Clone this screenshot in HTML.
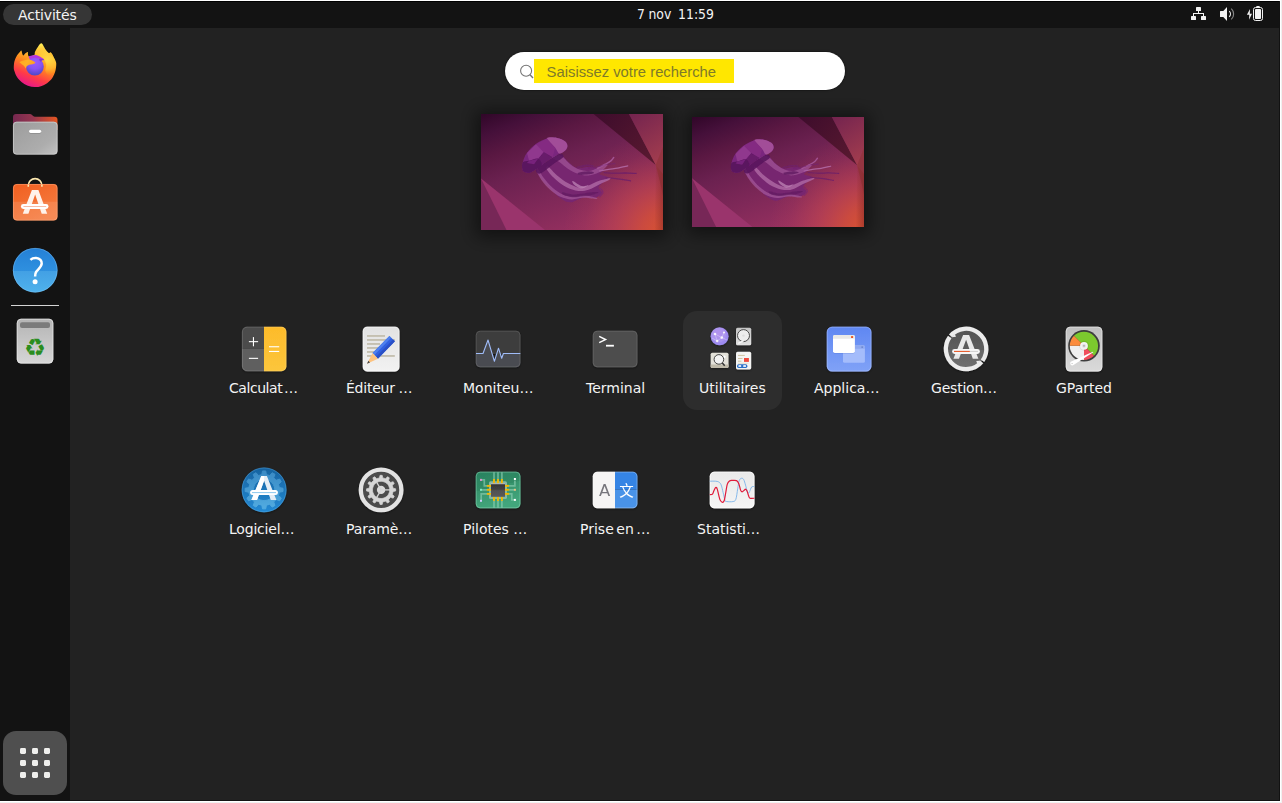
<!DOCTYPE html>
<html lang="fr">
<head>
<meta charset="utf-8">
<title>Activités</title>
<style>
*{box-sizing:border-box;margin:0;padding:0}
html,body{width:1282px;height:803px;overflow:hidden;background:#f0f0f0}
body{font-family:"DejaVu Sans","Liberation Sans",sans-serif;font-size:14px;color:#f2f2f2;position:relative}
#frame{position:absolute;left:0;top:0;width:1281px;height:802px;background:#fff}
#screen{position:absolute;left:0;top:1px;width:1280px;height:800px;background:#222222;overflow:hidden}
#topline{position:absolute;left:0;top:0;width:1280px;height:1px;background:#000;z-index:9}
#botline{position:absolute;left:0;top:799px;width:1280px;height:1px;background:#131313;z-index:9}
#rightline{position:absolute;left:1279px;top:0;width:1px;height:800px;background:#121212;z-index:9}
#topbar{position:absolute;left:0;top:0;width:1280px;height:27px;background:#131313}
#dock{position:absolute;left:0;top:27px;width:70px;height:773px;background:#131313}
#act{position:absolute;left:3px;top:3px;width:89px;height:21px;border-radius:11px;background:#363636}
#act span{position:absolute;left:15px;top:3px;line-height:17px;font-size:14px;letter-spacing:-.16px;color:#f4f4f4}
#clock{position:absolute;left:599.5px;width:152px;text-align:center;top:5px;line-height:17px;font-size:13.8px;word-spacing:-.5px;font-family:"DejaVu Sans Condensed","DejaVu Sans",sans-serif;font-stretch:condensed;color:#f4f4f4;white-space:pre}
#search{position:absolute;left:505px;top:51px;width:340px;height:38px;border-radius:19px;background:#fff;box-shadow:0 0 1.5px .5px rgba(0,0,0,.5)}
#search .hl{position:absolute;left:29px;top:6.5px;width:200px;height:24.7px;background:#ffe700}
#search .ph{position:absolute;left:41.6px;top:11.2px;line-height:18px;font-size:14.8px;font-family:"Liberation Sans","DejaVu Sans",sans-serif;color:#7d7a2a;white-space:nowrap}
.lbl{position:absolute;font-size:14px;line-height:17px;color:#f4f4f4;white-space:nowrap}
#folderbg{position:absolute;left:683px;top:310px;width:99px;height:99px;border-radius:14px;background:#2d2d2d}
</style>
</head>
<body>
<div id="frame"></div>
<div id="screen">
  <div id="topbar">
    <div id="act"><span>Activités</span></div>
    <div id="clock">7 nov  11:59</div>
  </div>
  <div id="dock"></div>
  <div id="search"><div class="hl"></div><div class="ph">Saisissez votre recherche</div></div>
  <div id="folderbg"></div>
<svg id="gfx" width="1280" height="800" viewBox="0 1 1280 800" style="position:absolute;left:0;top:0">
<defs>
<linearGradient id="wpA" gradientUnits="userSpaceOnUse" x1="0" y1="0" x2="61.9" y2="161.9"><stop offset="0" stop-color="#300628"/><stop offset=".12" stop-color="#45103a"/><stop offset=".25" stop-color="#5a1842"/><stop offset=".4" stop-color="#6b2150"/><stop offset=".6" stop-color="#7e2858"/><stop offset=".8" stop-color="#922f5e"/><stop offset="1" stop-color="#a03462"/></linearGradient>
<radialGradient id="wpV" gradientUnits="userSpaceOnUse" cx="186" cy="120" r="104"><stop offset="0" stop-color="#de562c" stop-opacity=".97"/><stop offset=".25" stop-color="#d24e3a" stop-opacity=".85"/><stop offset=".5" stop-color="#c8484a" stop-opacity=".55"/><stop offset=".8" stop-color="#c04450" stop-opacity=".14"/><stop offset="1" stop-color="#c04450" stop-opacity="0"/></radialGradient>
<linearGradient id="wpE" gradientUnits="userSpaceOnUse" x1="173" y1="0" x2="182" y2="0"><stop offset="0" stop-color="#8a2a28" stop-opacity="0"/><stop offset="1" stop-color="#8a2a28" stop-opacity=".55"/></linearGradient>
<linearGradient id="wpR" gradientUnits="userSpaceOnUse" x1="150" y1="0" x2="182" y2="50"><stop offset="0" stop-color="#74244f"/><stop offset="1" stop-color="#a53e4e"/></linearGradient>
<linearGradient id="wpD" gradientUnits="userSpaceOnUse" x1="120" y1="0" x2="175" y2="50"><stop offset="0" stop-color="#3f0d2c"/><stop offset="1" stop-color="#5b1a30"/></linearGradient>
<linearGradient id="wpJ" gradientUnits="userSpaceOnUse" x1="44" y1="56" x2="86" y2="28"><stop offset="0" stop-color="#5e1464"/><stop offset=".5" stop-color="#82287f"/><stop offset="1" stop-color="#a6509a"/></linearGradient>
<linearGradient id="wpT" gradientUnits="userSpaceOnUse" x1="60" y1="45" x2="150" y2="75"><stop offset="0" stop-color="#82307e"/><stop offset=".6" stop-color="#862e78"/><stop offset="1" stop-color="#8a2f78" stop-opacity=".75"/></linearGradient>
<filter id="wpBl" x="-10%" y="-10%" width="120%" height="120%"><feGaussianBlur stdDeviation=".5"/></filter>
<symbol id="wall" viewBox="0 0 182 116" preserveAspectRatio="none">
<rect width="182" height="116" fill="url(#wpA)"/>
<rect width="182" height="116" fill="url(#wpV)"/>
<path d="M0,64.5 L64,116 L0,116Z" fill="#9a346c"/>
<path d="M0,64.5 L25.5,116 L0,116Z" fill="#772757"/>
<path d="M112.5,0 L148,0 L174.8,51Z" fill="url(#wpD)"/>
<path d="M148,0 L182,0 L182,33 L174.8,51Z" fill="url(#wpR)"/>
<path d="M174.8,51 L182,33 L182,78Z" fill="#a83e46"/>
<path d="M174.8,51 L182,33 L182,82 L179.5,70Z" fill="#8e3340" fill-opacity=".8"/>
<path d="M174.8,51 L182,60 L182,116 L173.5,116Z" fill="url(#wpE)"/>
<g filter="url(#wpBl)">
<path d="M55.35,55.28 C56.28,52.39 62.17,49.99 66,47.43 C69.83,44.88 74.78,39.83 78.33,39.92 C81.88,40.02 84.31,45.62 87.3,48 C90.29,50.37 92.9,53.38 96.26,54.16 C99.63,54.95 104.11,52.7 107.48,52.7 C110.84,52.7 113.83,53.64 116.44,54.16 C119.06,54.68 122.8,54.82 123.17,55.84 C123.54,56.87 117.94,59.02 118.69,60.33 C119.43,61.64 127.28,62.2 127.65,63.69 C128.03,65.19 122.61,67.61 120.93,69.3 C119.25,70.98 117.57,72.19 117.57,73.78 C117.57,75.37 121.49,77.14 120.93,78.83 C120.37,80.51 117.38,83.07 114.2,83.87 C111.03,84.67 105.98,82.9 101.87,83.65 C97.76,84.39 93.09,88.13 89.54,88.35 C85.99,88.58 83.75,87.05 80.57,84.99 C77.39,82.94 73.84,79.39 70.48,76.02 C67.12,72.66 62.91,68.27 60.39,64.81 C57.87,61.36 54.41,58.18 55.35,55.28Z" fill="#772670"/>
<path d="M116.44,54.16 C117.75,53.51 122.05,51.45 124.29,50.24 C126.53,49.02 128.5,48 129.9,46.87 C131.3,45.75 132.23,44.07 132.7,43.51" fill="none" stroke="#a85a9e" stroke-width="1.5" stroke-opacity="0.85" stroke-linecap="round"/>
<path d="M118.69,56.96 C120.18,56.68 124.67,55.75 127.65,55.28 C130.64,54.82 133.45,54.72 136.62,54.16 C139.8,53.6 145.03,52.29 146.71,51.92" fill="none" stroke="#b46ca8" stroke-width="1.3" stroke-opacity="0.85" stroke-linecap="round"/>
<path d="M123.17,58.65 C124.85,58.74 129.71,59.15 133.26,59.21 C136.81,59.26 140.83,58.94 144.47,58.98 C148.11,59.02 153.35,59.36 155.12,59.43" fill="none" stroke="#6e2068" stroke-width="1.3" stroke-opacity="0.9" stroke-linecap="round"/>
<path d="M125.41,63.69 C127.28,63.88 132.61,64.29 136.62,64.81 C140.64,65.33 147.37,66.49 149.52,66.83" fill="none" stroke="#6e2068" stroke-width="1.3" stroke-opacity="0.85" stroke-linecap="round"/>
<path d="M118.69,73.78 C119.25,74.53 122.05,76.77 122.05,78.26 C122.05,79.76 119.25,82 118.69,82.75" fill="none" stroke="#7a2672" stroke-width="1.2" stroke-opacity="0.8" stroke-linecap="round"/>
<path d="M96.26,53.6 C97.76,53.23 102.62,51.64 105.23,51.36 C107.85,51.08 110.84,51.83 111.96,51.92" fill="none" stroke="#6e2068" stroke-width="1.6" stroke-opacity="0.8" stroke-linecap="round"/>
<path d="M107.48,53.6 C109.34,53.41 115.32,53.04 118.69,52.48 C122.05,51.92 125.13,50.7 127.65,50.24 C130.18,49.77 132.79,49.77 133.82,49.68" fill="none" stroke="#74226e" stroke-width="1.2" stroke-opacity="0.7" stroke-linecap="round"/>
<path d="M70.48,43.51 C70.29,44.59 75.34,45.94 78.33,48 C81.32,50.05 85.05,53.79 88.42,55.84 C91.78,57.9 95.33,59.39 98.51,60.33 C101.68,61.26 104.11,61.82 107.48,61.45 C110.84,61.07 115.51,59.77 118.69,58.09 C121.86,56.4 125.79,52.57 126.53,51.36 C127.28,50.14 124.85,50.33 123.17,50.8 C121.49,51.27 119.06,53.13 116.44,54.16 C113.83,55.19 110.46,56.72 107.48,56.96 C104.49,57.21 101.5,56.7 98.51,55.62 C95.52,54.54 92.71,52.82 89.54,50.46 C86.36,48.11 82.62,42.65 79.45,41.49 C76.27,40.33 70.67,42.43 70.48,43.51Z" fill="#a85a9e" fill-opacity=".62"/>
<path d="M67.12,52.48 C68.8,53.41 72.72,58.65 76.09,61.45 C79.45,64.25 83.56,67.24 87.3,69.3 C91.03,71.35 95.14,73.41 98.51,73.78 C101.87,74.15 104.3,72.66 107.48,71.54 C110.65,70.42 114.01,68.27 117.57,67.05 C121.12,65.84 127.09,64.4 128.78,64.25 C130.46,64.1 129.34,65.17 127.65,66.16 C125.97,67.15 122.05,68.59 118.69,70.19 C115.32,71.8 111.03,74.68 107.48,75.8 C103.93,76.92 101.12,77.39 97.39,76.92 C93.65,76.45 88.98,75.01 85.05,73 C81.13,70.98 77.02,67.67 73.84,64.81 C70.67,61.95 67.12,57.9 66,55.84 C64.87,53.79 65.43,51.55 67.12,52.48Z" fill="#b872ac" fill-opacity=".7"/>
<path d="M57.03,54.72 C58.15,55.84 60.2,60.51 62.63,63.69 C65.06,66.87 68.42,70.98 71.6,73.78 C74.78,76.58 78.33,79.01 81.69,80.51 C85.05,82 88.23,82.6 91.78,82.75 C95.33,82.9 99.07,81.25 102.99,81.4 C106.91,81.55 113.45,83.05 115.32,83.65 C117.19,84.24 116.44,84.95 114.2,84.99 C111.96,85.03 105.79,83.8 101.87,83.87 C97.95,83.94 94.4,85.63 90.66,85.44 C86.92,85.25 83,84.32 79.45,82.75 C75.9,81.18 72.54,78.83 69.36,76.02 C66.18,73.22 62.63,69.11 60.39,65.93 C58.15,62.76 56.47,58.83 55.91,56.96 C55.35,55.1 55.91,53.6 57.03,54.72Z" fill="#ae62a2" fill-opacity=".6"/>
<path d="M97.39,58.65 C98.88,58.05 104.86,57.19 107.48,57.19 C110.09,57.19 113.08,58.12 113.08,58.65 C113.08,59.17 109.9,59.97 107.48,60.33 C105.05,60.68 100.19,61.06 98.51,60.78 C96.83,60.5 95.89,59.24 97.39,58.65Z" fill="#5e1a5e" fill-opacity=".75"/>
<path d="M81.69,78.26 C83.19,78.17 88.42,80.28 91.78,80.51 C95.14,80.73 98.88,79.98 101.87,79.61 C104.86,79.24 107.1,78.49 109.72,78.26 C112.33,78.04 117.38,77.8 117.57,78.26 C117.75,78.73 113.45,80.41 110.84,81.07 C108.22,81.72 105.05,81.81 101.87,82.19 C98.69,82.56 94.96,83.5 91.78,83.31 C88.6,83.12 84.49,81.91 82.81,81.07 C81.13,80.23 80.2,78.36 81.69,78.26Z" fill="#5e1a5e" fill-opacity=".6"/>
<path d="M91.78,67.05 C93.09,67.33 98.13,71.44 100.75,72.1 C103.36,72.75 107.1,70.7 107.48,70.98 C107.85,71.26 104.49,73.28 102.99,73.78 C101.5,74.28 100.19,74.57 98.51,74 C96.83,73.44 94.02,71.58 92.9,70.42 C91.78,69.26 90.47,66.77 91.78,67.05Z" fill="#d9a6d0" fill-opacity=".55"/>
<path d="M55.35,55.28 C56.8,53.28 62.17,49.99 66,47.43 C69.83,44.88 75.62,40.67 78.33,39.92 C81.04,39.18 83.28,41.23 82.25,42.95 C81.22,44.67 75.52,47.72 72.16,50.24 C68.8,52.76 64.56,56.55 62.07,58.09 C59.59,59.62 58.37,59.9 57.25,59.43 C56.13,58.96 53.89,57.28 55.35,55.28Z" fill="#56145a" fill-opacity=".85"/>
<path d="M41.33,54.72 C41.05,53.04 41.14,50.61 41.89,48 C42.64,45.38 43.67,42.02 45.82,39.03 C47.96,36.04 51.42,32.49 54.78,30.06 C58.15,27.63 62.45,25.48 66,24.45 C69.55,23.43 73.1,23.43 76.09,23.89 C79.07,24.36 82.21,25.95 83.93,27.26 C85.65,28.56 86.31,30.25 86.4,31.74 C86.49,33.23 85.84,34.92 84.49,36.22 C83.15,37.53 80.48,38.37 78.33,39.59 C76.18,40.8 73.66,42.3 71.6,43.51 C69.55,44.73 67.86,45.57 66,46.87 C64.13,48.18 62.26,49.96 60.39,51.36 C58.52,52.76 56.65,54.07 54.78,55.28 C52.92,56.5 51.05,58.18 49.18,58.65 C47.31,59.11 44.88,58.74 43.57,58.09 C42.27,57.43 41.61,56.4 41.33,54.72Z" fill="#7a277e"/>
<path d="M66,24.45 C66.28,22.77 73.1,23.43 76.09,23.89 C79.07,24.36 82.21,25.95 83.93,27.26 C85.65,28.56 86.31,30.25 86.4,31.74 C86.49,33.23 85.84,34.92 84.49,36.22 C83.15,37.53 80.01,39.96 78.33,39.59 C76.65,39.21 76.46,36.5 74.4,33.98 C72.35,31.46 65.72,26.13 66,24.45Z" fill="#a24e98"/>
<path d="M55.01,30.28 L66,24.57 L74.18,33.76 L71.6,43.29 L62.63,37.91Z" fill="#842c82"/>
<path d="M62.63,37.91 L71.6,43.29 L66.22,46.87 L60.61,51.13 L57.03,44.63Z" fill="#671a6a"/>
<path d="M46.04,39.03 L55.01,30.28 L62.63,37.91 L57.03,44.63 L48.06,46.87Z" fill="#90388e"/>
<path d="M41.33,54.72 C41.05,53.08 40.77,49.53 41.89,48.22 C43.01,46.91 45.54,47.47 48.06,46.87 C50.58,46.28 54.93,43.92 57.03,44.63 C59.12,45.34 60.99,49.36 60.61,51.13 C60.24,52.91 56.69,54.03 54.78,55.28 C52.88,56.53 51.05,58.18 49.18,58.65 C47.31,59.11 44.88,58.74 43.57,58.09 C42.27,57.43 41.61,56.37 41.33,54.72Z" fill="#5a155e"/>
<path d="M48.06,46.87 L57.03,44.63 L53.1,50.24 L45.82,49.12Z" fill="#7e2682" fill-opacity=".8"/>
</g>
</symbol></defs>
<defs><filter id="thS" x="-30%" y="-40%" width="160%" height="180%"><feGaussianBlur stdDeviation="9"/></filter></defs>
<rect x="476" y="111" width="192" height="126" fill="#000" fill-opacity=".5" filter="url(#thS)"/>
<rect x="687" y="114" width="182" height="120" fill="#000" fill-opacity=".5" filter="url(#thS)"/>
<use href="#wall" x="481" y="114" width="182" height="116"/>
<use href="#wall" x="692" y="117" width="172" height="110"/>
<circle cx="526.1" cy="70.8" r="5.5" fill="none" stroke="#747474" stroke-width="1.1"/><path d="M530,74.8 L533,77.9" stroke="#747474" stroke-width="1.4"/>
<defs><filter id="icS" x="-2%" y="-5%" width="104%" height="110%"><feDropShadow dx="0" dy="1" stdDeviation="0.9" flood-color="#000" flood-opacity=".4"/></filter></defs>
<g fill="#f2f2f2">
<rect x="1196" y="7" width="5" height="4" rx=".6"/><rect x="1191" y="16" width="5" height="4" rx=".6"/><rect x="1201" y="16" width="5" height="4" rx=".6"/>
<rect x="1198" y="10.5" width="1" height="3"/><rect x="1193" y="13" width="11" height="1"/><rect x="1193" y="13" width="1" height="3.5"/><rect x="1203" y="13" width="1" height="3.5"/>
<path d="M1220.6,11 L1223.3,11 L1227,7 L1227,21 L1223.3,17 L1220.6,17 Q1220,17 1220,16.4 L1220,11.6 Q1220,11 1220.6,11Z"/>
</g>
<path d="M1229.3,11.2 A4,4 0 0 1 1229.3,16.8" fill="none" stroke="#f2f2f2" stroke-width="1.1"/>
<path d="M1231.3,8.6 A7.4,7.4 0 0 1 1231.3,19.4" fill="none" stroke="#8a8a8a" stroke-width="1.1"/>
<path d="M1250,9 L1246.9,14.7 L1249.3,14.7 L1249,19.8 L1252,13.7 L1249.8,13.7 Z" fill="#f2f2f2"/>
<rect x="1253.5" y="7.5" width="9" height="13" rx="2" fill="none" stroke="#f2f2f2" stroke-width="1"/>
<path d="M1256,7.2 L1256.6,6 L1259.4,6 L1260,7.2Z" fill="#f2f2f2"/>
<rect x="1255" y="9" width="6" height="10" rx=".8" fill="#f2f2f2"/>
<defs><linearGradient id="ffA" gradientUnits="userSpaceOnUse" x1="46" y1="44" x2="27" y2="87"><stop offset="0" stop-color="#fff25a"/><stop offset=".28" stop-color="#ffc330"/><stop offset=".5" stop-color="#ff8a1e"/><stop offset=".75" stop-color="#ff3b47"/><stop offset="1" stop-color="#e51490"/></linearGradient><radialGradient id="ffG" gradientUnits="userSpaceOnUse" cx="35" cy="62" r="13"><stop offset="0" stop-color="#9a5cff"/><stop offset=".55" stop-color="#8652f2"/><stop offset="1" stop-color="#4f49c8"/></radialGradient><linearGradient id="ffH" gradientUnits="userSpaceOnUse" x1="18" y1="55" x2="34" y2="66"><stop offset="0" stop-color="#ffa21e"/><stop offset=".6" stop-color="#ffb227"/><stop offset="1" stop-color="#ff9a22"/></linearGradient><radialGradient id="ffY" gradientUnits="userSpaceOnUse" cx="47" cy="60" r="16"><stop offset="0" stop-color="#ffe04a" stop-opacity=".85"/><stop offset=".6" stop-color="#ffc436" stop-opacity=".6"/><stop offset="1" stop-color="#ff9a20" stop-opacity="0"/></radialGradient></defs>
<path d="M41.41,43.25 C42.72,43.54 44.17,47.58 45.34,49.18 C46.5,50.78 47.52,52.23 48.39,52.84 C49.26,53.45 49.77,52.29 50.57,52.84 C51.37,53.39 52.31,54.73 53.18,56.16 C54.05,57.58 55.29,59.93 55.8,61.39 C56.31,62.84 56.31,63.28 56.23,64.87 C56.16,66.47 56.02,68.8 55.36,70.98 C54.71,73.16 53.69,75.92 52.31,77.95 C50.93,79.99 48.97,81.8 47.08,83.18 C45.19,84.56 43.01,85.58 40.98,86.23 C38.94,86.89 37.05,87.18 34.87,87.11 C32.69,87.03 30.08,86.6 27.9,85.8 C25.72,85 23.61,83.76 21.8,82.31 C19.98,80.86 18.24,78.97 17,77.08 C15.77,75.19 14.92,72.57 14.39,70.98 C13.85,69.38 13.78,69.09 13.78,67.49 C13.78,65.89 13.92,63.28 14.39,61.39 C14.85,59.5 15.69,57.68 16.56,56.16 C17.44,54.63 18.82,53.18 19.62,52.23 C20.42,51.29 20.92,50.27 21.36,50.49 C21.8,50.71 21.9,52.71 22.23,53.54 C22.57,54.37 22.78,55.53 23.37,55.46 C23.95,55.39 24.99,53.68 25.72,53.1 C26.45,52.52 27.33,51.68 27.72,51.97 C28.12,52.26 27.83,54.08 28.07,54.85 C28.32,55.62 28.15,56.59 29.21,56.59 C30.27,56.59 33.49,55.57 34.44,54.85 C35.38,54.12 34.37,53.47 34.87,52.23 C35.38,51 36.4,48.93 37.49,47.44 C38.58,45.94 40.1,42.96 41.41,43.25Z" fill="url(#ffA)"/>
<path d="M47.78,53.71 L50.83,52.32 L52.31,54.59 L53.88,57.72 L50.13,56.16Z" fill="#ffc233"/>
<path d="M41.41,43.95 C42.57,44.39 44.1,48.02 45.34,49.62 C46.57,51.21 47.59,52.3 48.82,53.54 C50.06,54.77 51.7,55.57 52.75,57.03 C53.79,58.48 54.66,60.66 55.1,62.26 C55.54,63.86 55.61,65.02 55.36,66.62 C55.11,68.22 54.71,70.4 53.62,71.85 C52.53,73.3 50.2,75.48 48.82,75.34 C47.44,75.19 45.77,72.72 45.34,70.98 C44.9,69.23 46.5,66.91 46.21,64.87 C45.92,62.84 44.9,60.37 43.59,58.77 C42.28,57.17 39.81,56.01 38.36,55.28 C36.91,54.56 35.31,55.14 34.87,54.41 C34.44,53.68 35.16,52.16 35.75,50.92 C36.33,49.69 37.42,48.16 38.36,47 C39.31,45.84 40.25,43.51 41.41,43.95Z" fill="url(#ffY)"/>
<path d="M28.77,56.59 C28.99,55.89 30.66,55.73 31.82,55.46 C32.98,55.18 34.51,54.82 35.75,54.93 C36.98,55.05 38.07,55.59 39.23,56.16 C40.4,56.72 41.92,57.68 42.72,58.33 C43.52,58.99 44.32,59.93 44.03,60.08 C43.74,60.22 41.92,59.42 40.98,59.21 C40.03,58.99 39.38,58.7 38.36,58.77 C37.34,58.84 36.18,59.5 34.87,59.64 C33.57,59.79 31.53,60.15 30.51,59.64 C29.5,59.13 28.55,57.29 28.77,56.59Z" fill="#b436e2"/>
<circle cx="34.9" cy="66.6" r="8.9" fill="url(#ffG)"/>
<path d="M39.67,58.77 C40.18,58.58 41.56,58.73 42.28,58.95 C43.01,59.16 44.1,59.82 44.03,60.08 C43.96,60.34 42.36,60.22 41.85,60.51 C41.34,60.8 41.41,61.89 40.98,61.82 C40.54,61.75 39.45,60.59 39.23,60.08 C39.01,59.57 39.16,58.96 39.67,58.77Z" fill="#7a38d6"/>
<path d="M19.62,62.08 C19.91,61.47 22.01,60.95 23.54,60.51 C25.07,60.08 27.24,59.44 28.77,59.47 C30.3,59.5 31.6,60.15 32.69,60.69 C33.78,61.23 35.35,62.11 35.31,62.69 C35.27,63.28 33.45,63.81 32.43,64.18 C31.42,64.54 30.18,64.5 29.21,64.87 C28.23,65.25 27.17,65.86 26.59,66.44 C26.01,67.02 26.16,68.48 25.72,68.36 C25.28,68.24 24.63,66.44 23.98,65.75 C23.32,65.05 22.52,64.79 21.8,64.18 C21.07,63.57 19.33,62.69 19.62,62.08Z" fill="url(#ffH)"/>
<defs><linearGradient id="flB" x1="0" y1="0" x2="1" y2="0"><stop offset="0" stop-color="#762850"/><stop offset=".45" stop-color="#96364f"/><stop offset="1" stop-color="#e65621"/></linearGradient><linearGradient id="flF" x1="0" y1="0" x2="1" y2="1"><stop offset="0" stop-color="#9c9c9c"/><stop offset=".7" stop-color="#adadad"/><stop offset="1" stop-color="#c2c2c2"/></linearGradient></defs>
<path d="M13,117 Q13,114 16,114 L30,114 Q31.2,114 32,114.9 L33.2,116.1 Q33.8,116.7 35,116.7 L54.5,116.7 Q57.5,116.7 57.5,119.7 L57.5,130 L13,130Z" fill="url(#flB)"/>
<rect x="13" y="121.8" width="44.5" height="32.8" rx="3.6" fill="url(#flF)"/>
<rect x="13.4" y="122.2" width="43.7" height="32" rx="3.3" fill="none" stroke="#d9d9d9" stroke-opacity=".75" stroke-width=".8"/>
<rect x="29" y="130.3" width="12.2" height="3.4" rx="1.7" fill="#8a8a8a"/>
<rect x="29" y="129.7" width="12.2" height="3.2" rx="1.6" fill="#fff"/>
<defs><linearGradient id="swB" x1="0" y1="0" x2=".6" y2="1"><stop offset="0" stop-color="#f15f20"/><stop offset="1" stop-color="#f57c40"/></linearGradient></defs>
<path d="M28.3,186.6 L28.3,185.4 A6.8,6.8 0 0 1 41.9,185.4 L41.9,186.6" fill="none" stroke="#fce8b0" stroke-width="1.6"/>
<rect x="13" y="184" width="44.5" height="36.5" rx="4" fill="url(#swB)"/>
<path d="M13,201.8 H57.5 V216.5 Q57.5,220.5 53.5,220.5 H17 Q13,220.5 13,216.5Z" fill="#fff" fill-opacity=".11"/>
<rect x="13.4" y="184.4" width="43.7" height="35.7" rx="3.7" fill="none" stroke="#ffb48a" stroke-opacity=".55" stroke-width=".8"/>
<path d="M28.3,186.8 V184.6 M41.9,186.8 V184.6" stroke="#fce8b0" stroke-width="1.6"/>
<path d="M31.9,190 L38.4,190 L47.2,213.8 L41.7,213.8 L35.15,194.5 L28.4,213.8 L22.8,213.8Z" fill="#fff2ea"/>
<rect x="20.9" y="204.1" width="27.6" height="4.9" rx="2.45" fill="#fff"/>
<rect x="23.4" y="206.1" width="22.8" height=".9" fill="#f8b59c"/>
<defs><linearGradient id="hpB" x1="0" y1="0" x2="0" y2="1"><stop offset="0" stop-color="#2480d6"/><stop offset=".52" stop-color="#2f90df"/><stop offset=".52" stop-color="#43a0e4"/><stop offset="1" stop-color="#4fb2ec"/></linearGradient></defs>
<circle cx="35.2" cy="270.2" r="22.3" fill="url(#hpB)"/>
<circle cx="35.2" cy="270.2" r="21.9" fill="none" stroke="#8fd0ff" stroke-opacity=".45" stroke-width=".8"/>
<path d="M30.4,259.9 C32,258.4 34.3,258 36.2,258.1 C40,258.3 41.9,260.9 41.7,263.6 C41.4,267.2 37.6,269.6 36.1,272 C35.2,273.4 35.1,274.6 35.1,276.6" fill="none" stroke="#fff" stroke-width="2.5"/>
<circle cx="35.1" cy="281.7" r="2.5" fill="#fff"/>
<rect x="11" y="305" width="48" height="1" fill="#d4d4d4"/>
<defs><linearGradient id="trB" x1="0" y1="0" x2="0" y2="1"><stop offset="0" stop-color="#b4b4b4"/><stop offset="1" stop-color="#d6d6d6"/></linearGradient></defs>
<rect x="16.8" y="318.8" width="36.5" height="44.7" rx="4.2" fill="url(#trB)"/>
<rect x="17.2" y="319.2" width="35.7" height="43.9" rx="3.9" fill="none" stroke="#ececec" stroke-opacity=".8" stroke-width=".8"/>
<rect x="20" y="322.3" width="30" height="5.8" rx="2" fill="#7b7b7b"/>
<text x="35.1" y="355.6" font-family="DejaVu Sans,sans-serif" font-size="24.5" text-anchor="middle" fill="#2a8d1e">♻</text>
<rect x="3" y="731" width="64" height="64" rx="13" fill="#4f4f4f"/>
<rect x="20" y="748" width="6" height="6" rx="1.4" fill="#efefed"/>
<rect x="32" y="748" width="6" height="6" rx="1.4" fill="#efefed"/>
<rect x="44" y="748" width="6" height="6" rx="1.4" fill="#efefed"/>
<rect x="20" y="760" width="6" height="6" rx="1.4" fill="#efefed"/>
<rect x="32" y="760" width="6" height="6" rx="1.4" fill="#efefed"/>
<rect x="44" y="760" width="6" height="6" rx="1.4" fill="#efefed"/>
<rect x="20" y="772" width="6" height="6" rx="1.4" fill="#efefed"/>
<rect x="32" y="772" width="6" height="6" rx="1.4" fill="#efefed"/>
<rect x="44" y="772" width="6" height="6" rx="1.4" fill="#efefed"/>
<g filter="url(#icS)">
<defs><clipPath id="ccp"><rect x="242" y="326.7" width="44.4" height="44.6" rx="5"/></clipPath><linearGradient id="clY" x1="0" y1="0" x2="0" y2="1"><stop offset="0" stop-color="#fdbb2a"/><stop offset="1" stop-color="#fcc63c"/></linearGradient></defs>
<g clip-path="url(#ccp)"><rect x="242" y="326" width="22" height="22.7" fill="#4b4b4b"/><rect x="242" y="348.7" width="22" height="23" fill="#5e5e5e"/><rect x="264" y="326" width="23" height="46" fill="url(#clY)"/></g>
<rect x="242.4" y="327.1" width="43.6" height="43.8" rx="4.7" fill="none" stroke="#fff" stroke-opacity=".18" stroke-width=".8"/>
<g fill="#fff"><rect x="248.9" y="341.1" width="9.2" height="1.1"/><rect x="252.9" y="337.1" width="1.1" height="9.2"/><rect x="248.9" y="357.8" width="9.2" height="1.1"/><rect x="269" y="346.2" width="10.2" height="1.1"/><rect x="269" y="350.9" width="10.2" height="1.1"/></g>
<defs><linearGradient id="teB" x1="0" y1="0" x2="0" y2="1"><stop offset="0" stop-color="#e2e2e2"/><stop offset="1" stop-color="#f2f2f2"/></linearGradient></defs>
<rect x="362.8" y="326.7" width="36.6" height="44.7" rx="4.4" fill="url(#teB)"/>
<rect x="363.2" y="327.1" width="35.8" height="43.9" rx="4.1" fill="none" stroke="#fff" stroke-opacity=".7" stroke-width=".8"/>
<g fill="#c5c0b1">
<rect x="367" y="335" width="18" height="1.9"/>
<rect x="367" y="339" width="27.8" height="1.9"/>
<rect x="367" y="343" width="13" height="1.9"/>
<rect x="367" y="347" width="17" height="1.9"/>
<rect x="367" y="351" width="13" height="1.9"/>
<rect x="367" y="355" width="27.8" height="1.9"/>
</g>
<path d="M389.4,335.9 L394.9,341.3 L377.9,358.7 L372.6,353.1Z" fill="#3060e0"/>
<path d="M389.4,335.9 L391.2,337.7 L374.4,355 L372.6,353.1Z" fill="#4f80ee"/>
<path d="M393.1,339.5 L394.9,341.3 L377.9,358.7 L376.1,356.8Z" fill="#2950c6"/>
<path d="M372.6,353.1 L377.9,358.7 L367,363.8Z" fill="#fdc380"/>
<path d="M367,363.8 L368.4,360.8 L370,362.4Z" fill="#454545"/>
<defs><clipPath id="smc"><rect x="475.8" y="330.8" width="44.6" height="36.4" rx="4.3"/></clipPath></defs>
<g clip-path="url(#smc)"><rect x="475" y="330" width="46" height="24" fill="#3c3c3c"/>
<path d="M475,353.5 L483,353.5 L488,340 L494.4,361.3 L498.5,348.2 L501.7,358.3 L503.4,353.5 L521,353.5 L521,368 L475,368Z" fill="#4a4b51"/></g>
<rect x="476.2" y="331.2" width="43.8" height="35.6" rx="4" fill="none" stroke="#8a8a8a" stroke-opacity=".38" stroke-width=".8"/>
<path d="M476,353.5 L483,353.5 L488,340 L494.4,361.3 L498.5,348.2 L501.7,358.3 L503.4,353.5 L520.3,353.5" fill="none" stroke="#9fbcf8" stroke-width="1.1" stroke-linejoin="round"/>
<rect x="592.8" y="330.8" width="44.6" height="36.4" rx="4.3" fill="#4d4d4d"/>
<rect x="593.2" y="331.2" width="43.8" height="35.6" rx="4" fill="none" stroke="#8c8c8c" stroke-opacity=".38" stroke-width=".8"/>
<path d="M599.2,336.4 L605.5,339.6 L599.2,342.6" fill="none" stroke="#fff" stroke-width="1.5"/>
<rect x="606" y="344.8" width="7.9" height="1.8" fill="#fff"/>
<defs><radialGradient id="utG" cx=".45" cy=".35" r=".7"><stop offset="0" stop-color="#ab86ec"/><stop offset="1" stop-color="#9a8cf2"/></radialGradient><linearGradient id="utD" x1="0" y1="0" x2="0" y2="1"><stop offset="0" stop-color="#c4c4c4"/><stop offset="1" stop-color="#e2e2e2"/></linearGradient></defs>
<circle cx="719.6" cy="336.3" r="9" fill="url(#utG)"/>
<circle cx="718.5" cy="335" r="7.5" fill="#fff" fill-opacity=".1"/><g fill="#fff" fill-opacity=".85"><circle cx="715" cy="334" r="1.3"/><circle cx="724" cy="332.5" r="1.1"/><circle cx="721.8" cy="337.6" r="1.3"/><circle cx="717.2" cy="341" r="1.2"/></g>
<path d="M715,334 L721.8,337.6 L724,332.5 M721.8,337.6 L717.2,341 L715,334 M712,338 L717.2,341 M721.8,337.6 L727,340" stroke="#fff" stroke-opacity=".4" stroke-width=".7" fill="none"/>
<rect x="736" y="327.7" width="15.2" height="17.6" rx="1.6" fill="url(#utD)"/>
<circle cx="743.5" cy="335.6" r="6" fill="#ededed" stroke="#3a3a3a" stroke-width=".9"/>
<circle cx="743.5" cy="335.6" r="1.2" fill="#dcdcdc"/>
<path d="M738.3,343.4 L743.6,340.6" stroke="#fafafa" stroke-width="1.3"/>
<rect x="710.7" y="352.7" width="17.8" height="15.4" rx="1.6" fill="#e3e1d9"/>
<path d="M710.7,364.6 H728.5 V366.5 Q728.5,368.1 726.9,368.1 H712.3 Q710.7,368.1 710.7,366.5Z" fill="#bfbaaa"/>
<circle cx="724.4" cy="356.8" r="1.2" fill="#fff"/>
<circle cx="718.9" cy="359.4" r="4.8" fill="#f4f4f4" stroke="#333" stroke-width=".9"/>
<path d="M722.3,363 L724.7,365.7" stroke="#333" stroke-width="1.5"/>
<rect x="736" y="351.8" width="15.2" height="17.6" rx="1.6" fill="#f4f4f3"/>
<g fill="#cdbf98"><rect x="738" y="354.9" width="6.8" height=".9"/><rect x="738" y="358" width="4.5" height=".9"/><rect x="738" y="360.7" width="3.4" height=".9"/><rect x="738" y="362.9" width="10.5" height=".6" fill-opacity=".6"/></g>
<rect x="744" y="358" width="4.9" height="3.9" fill="#f04a3e"/>
<rect x="737" y="364.3" width="10.4" height="3.6" rx="1.6" fill="#2c70c8"/>
<rect x="738.4" y="365.1" width="2.8" height="1.9" rx=".6" fill="#dce8f8"/><rect x="743.2" y="365.1" width="2.8" height="1.9" rx=".6" fill="#dce8f8"/>
<defs><linearGradient id="exB" x1="0" y1="0" x2="0" y2="1"><stop offset="0" stop-color="#5f87f2"/><stop offset="1" stop-color="#80a2f7"/></linearGradient></defs>
<rect x="826.8" y="326.7" width="44.6" height="44.7" rx="5.2" fill="url(#exB)"/>
<rect x="827.2" y="327.1" width="43.8" height="43.9" rx="4.9" fill="none" stroke="#c5d5ff" stroke-opacity=".5" stroke-width=".8"/>
<rect x="843" y="345.3" width="21.9" height="17.5" rx="1.6" fill="#a4bcfb"/>
<path d="M843,348.8 V346.9 Q843,345.3 844.6,345.3 H863.3 Q864.9,345.3 864.9,346.9 V348.8Z" fill="#8fa9f0"/>
<rect x="861.4" y="346.4" width="1.6" height="1.5" fill="#6e88cc"/>
<rect x="833" y="335.3" width="21.9" height="18.2" rx="1.8" fill="#3c5fc0" fill-opacity=".35"/>
<rect x="833" y="335" width="21.9" height="18" rx="1.8" fill="#fff"/>
<path d="M833,338.7 V336.8 Q833,335 834.8,335 H853.1 Q854.9,335 854.9,336.8 V338.7Z" fill="#e9e9e7"/>
<rect x="851.1" y="336.1" width="2" height="1.9" fill="#e95420"/>
<defs><linearGradient id="umD" x1="0" y1="0" x2="0" y2="1"><stop offset="0" stop-color="#555"/><stop offset=".52" stop-color="#5d5d5d"/><stop offset=".52" stop-color="#686868"/><stop offset="1" stop-color="#6e6e6e"/></linearGradient></defs>
<circle cx="966.1" cy="348.9" r="20" fill="url(#umD)"/>
<path d="M950.59,335.88 A20.25,20.25 0 0 1 982.48,360.8" fill="none" stroke="#ececec" stroke-width="4.3"/>
<path d="M981.61,361.92 A20.25,20.25 0 0 1 949.72,337" fill="none" stroke="#ececec" stroke-width="4.3"/>
<path d="M952.08,337.14 L955.94,336.8 L954.91,334.05 Z" fill="#ececec"/>
<path d="M980.12,360.66 L976.26,361 L977.29,363.75 Z" fill="#ececec"/>
<path d="M963.1,335 L969.1,335 L978.4,358.7 L972.8,358.7 L966.1,339.8 L959,358.7 L953.4,358.7Z" fill="#e9e9e9"/>
<rect x="952.1" y="349" width="27.8" height="4.9" rx="2.45" fill="#f6f6f6"/>
<rect x="954" y="350.9" width="24" height="1" fill="#cfcfcf"/><rect x="954" y="350.9" width="15.8" height="1" fill="#e95420"/>
<defs><linearGradient id="gpB" x1="0" y1="0" x2="0" y2="1"><stop offset="0" stop-color="#c0c0c0"/><stop offset="1" stop-color="#dadada"/></linearGradient></defs>
<rect x="1065.8" y="326.7" width="36.5" height="44.7" rx="4.3" fill="url(#gpB)"/>
<rect x="1066.2" y="327.1" width="35.7" height="43.9" rx="4" fill="none" stroke="#f0f0f0" stroke-opacity=".7" stroke-width=".8"/>
<circle cx="1084.0" cy="345.8" r="15.8" fill="#3c3c3c"/>
<path d="M1084,345.8 L1073.96,335.76 A14.2,14.2 0 0 1 1094.04,355.84 Z" fill="#7cc92e"/>
<path d="M1084,345.8 L1094.04,355.84 A14.2,14.2 0 0 1 1084,360 Z" fill="#f04f5c"/>
<path d="M1084,345.8 L1084,360 A14.2,14.2 0 0 1 1069.8,345.8 Z" fill="#efefef"/>
<path d="M1084,345.8 L1069.8,345.8 A14.2,14.2 0 0 1 1073.96,335.76 Z" fill="#fb8c3d"/>
<circle cx="1084.0" cy="345.8" r="5" fill="#000" fill-opacity=".08"/>
<circle cx="1084.0" cy="345.8" r="3.9" fill="#f3f3f3"/>
<circle cx="1084.0" cy="345.8" r="1.9" fill="#dedede"/><circle cx="1084.0" cy="345.8" r=".9" fill="#a8a8a8"/>
<path d="M1070.7,361.8 L1092.9,351.7 L1093.3,352.3 L1073.1,365.3 A2.2,2.2 0 0 1 1070.7,361.8Z" fill="#fff"/>
<circle cx="1072.1" cy="363.5" r=".6" fill="#bbb"/>
<defs><linearGradient id="suB" x1="0" y1="0" x2="0" y2="1"><stop offset="0" stop-color="#17629f"/><stop offset="1" stop-color="#238ad4"/></linearGradient><linearGradient id="suG" x1="0" y1="0" x2="0" y2="1"><stop offset="0" stop-color="#3a8ac4"/><stop offset="1" stop-color="#52abe0"/></linearGradient></defs>
<circle cx="264.1" cy="489.9" r="22.4" fill="url(#suB)"/>
<circle cx="264.1" cy="489.9" r="22" fill="none" stroke="#7cc4f0" stroke-opacity=".35" stroke-width=".8"/>
<path d="M261.79,474.67 L262.51,470.97 L265.69,470.97 L266.41,474.67 L269.71,475.56 L272.19,472.71 L274.94,474.3 L273.71,477.87 L276.13,480.29 L279.7,479.06 L281.29,481.81 L278.44,484.29 L279.33,487.59 L283.03,488.31 L283.03,491.49 L279.33,492.21 L278.44,495.51 L281.29,497.99 L279.7,500.74 L276.13,499.51 L273.71,501.93 L274.94,505.5 L272.19,507.09 L269.71,504.24 L266.41,505.13 L265.69,508.83 L262.51,508.83 L261.79,505.13 L258.49,504.24 L256.01,507.09 L253.26,505.5 L254.49,501.93 L252.07,499.51 L248.5,500.74 L246.91,497.99 L249.76,495.51 L248.87,492.21 L245.17,491.49 L245.17,488.31 L248.87,487.59 L249.76,484.29 L246.91,481.81 L248.5,479.06 L252.07,480.29 L254.49,477.87 L253.26,474.3 L256.01,472.71 L258.49,475.56Z M274.64,488.04 L274.15,486.24 L273.37,484.55 L272.3,483.02 L270.98,481.7 L269.45,480.63 L267.76,479.85 L265.96,479.36 L264.1,479.2 L262.24,479.36 L260.44,479.85 L258.75,480.63 L257.22,481.7 L255.9,483.02 L254.83,484.55 L254.05,486.24 L253.56,488.04 L253.4,489.9 L253.56,491.76 L254.05,493.56 L254.83,495.25 L255.9,496.78 L257.22,498.1 L258.75,499.17 L260.44,499.95 L262.24,500.44 L264.1,500.6 L265.96,500.44 L267.76,499.95 L269.45,499.17 L270.98,498.1 L272.3,496.78 L273.37,495.25 L274.15,493.56 L274.64,491.76 L274.8,489.9Z" fill="url(#suG)" fill-rule="evenodd" stroke="url(#suG)" stroke-width="1" stroke-linejoin="round"/>
<path d="M261.3,476 L266.9,476 L276.4,499.9 L270.8,499.9 L264.1,480.8 L257,499.9 L251.4,499.9Z" fill="#e4edf5"/>
<path d="M261.3,476 L264.1,476 L264.1,480.8 L257,499.9 L251.4,499.9Z" fill="#fff"/>
<rect x="250.1" y="490.1" width="27.8" height="5" rx="2.5" fill="#fff"/>
<rect x="252" y="492.1" width="24" height="1" fill="#8cc8ee"/>
<circle cx="381.1" cy="489.9" r="20.3" fill="#4b4b4b" stroke="#e3e3e3" stroke-width="4.3"/>
<path d="M379.43,477.92 L380,475.34 L382.2,475.34 L382.77,477.92 L385.65,478.69 L387.43,476.74 L389.33,477.84 L388.54,480.36 L390.64,482.46 L393.16,481.67 L394.26,483.57 L392.31,485.35 L393.08,488.23 L395.66,488.8 L395.66,491 L393.08,491.57 L392.31,494.45 L394.26,496.23 L393.16,498.13 L390.64,497.34 L388.54,499.44 L389.33,501.96 L387.43,503.06 L385.65,501.11 L382.77,501.88 L382.2,504.46 L380,504.46 L379.43,501.88 L376.55,501.11 L374.77,503.06 L372.87,501.96 L373.66,499.44 L371.56,497.34 L369.04,498.13 L367.94,496.23 L369.89,494.45 L369.12,491.57 L366.54,491 L366.54,488.8 L369.12,488.23 L369.89,485.35 L367.94,483.57 L369.04,481.67 L371.56,482.46 L373.66,480.36 L372.87,477.84 L374.77,476.74 L376.55,478.69Z M389.57,488.41 L389.18,486.96 L388.55,485.6 L387.69,484.37 L386.63,483.31 L385.4,482.45 L384.04,481.82 L382.59,481.43 L381.1,481.3 L379.61,481.43 L378.16,481.82 L376.8,482.45 L375.57,483.31 L374.51,484.37 L373.65,485.6 L373.02,486.96 L372.63,488.41 L372.5,489.9 L372.63,491.39 L373.02,492.84 L373.65,494.2 L374.51,495.43 L375.57,496.49 L376.8,497.35 L378.16,497.98 L379.61,498.37 L381.1,498.5 L382.59,498.37 L384.04,497.98 L385.4,497.35 L386.63,496.49 L387.69,495.43 L388.55,494.2 L389.18,492.84 L389.57,491.39 L389.7,489.9Z" fill="#d6d6d6" fill-rule="evenodd" stroke="#d6d6d6" stroke-width=".7" stroke-linejoin="round"/>
<circle cx="381.1" cy="489.9" r="4.2" fill="#dadada"/>
<path d="M381.1,489.9 L390.1,489.9" stroke="#d4d4d4" stroke-width="1.3"/>
<path d="M381.1,489.9 L376.6,482.11" stroke="#d4d4d4" stroke-width="1.3"/>
<path d="M381.1,489.9 L376.6,497.69" stroke="#d4d4d4" stroke-width="1.3"/>
<defs><linearGradient id="drB" x1="0" y1="0" x2=".3" y2="1"><stop offset="0" stop-color="#2a8260"/><stop offset=".5" stop-color="#318c66"/><stop offset=".5" stop-color="#37946d"/><stop offset="1" stop-color="#43a67c"/></linearGradient><linearGradient id="drC" x1="0" y1="0" x2="0" y2="1"><stop offset="0" stop-color="#333"/><stop offset=".5" stop-color="#464646"/><stop offset=".5" stop-color="#505050"/><stop offset="1" stop-color="#5a5a5a"/></linearGradient></defs>
<rect x="475.8" y="471.7" width="44.6" height="36.5" rx="4.3" fill="url(#drB)"/>
<rect x="476.2" y="472.1" width="43.8" height="35.7" rx="4" fill="none" stroke="#9be0c0" stroke-opacity=".55" stroke-width=".8"/>
<g stroke="#8fd0b4" stroke-opacity=".62" stroke-width="1.7" fill="none">
<path d="M494,472.2 V480 M494,500 V507.8"/>
<path d="M498,472.2 V480 M498,500 V507.8"/>
<path d="M501.9,472.2 V480 M501.9,500 V507.8"/>
<path d="M487,485.9 H484.3 V479.9 H482 M487,489.8 H482 M487,493.9 H481.2 V500"/>
<path d="M509,485.9 H514.9 V480.5 M509,489.8 H514 M509,493.9 H511.8 V499.9 H514"/>
</g>
<rect x="489" y="481.3" width="18" height="17.8" rx="1.6" fill="#86b8a6"/>
<g fill="#f2b705">
<rect x="493.05" y="479" width="1.9" height="4.7"/><rect x="493.05" y="496.6" width="1.9" height="4.3"/>
<rect x="497.05" y="479" width="1.9" height="4.7"/><rect x="497.05" y="496.6" width="1.9" height="4.3"/>
<rect x="500.95" y="479" width="1.9" height="4.7"/><rect x="500.95" y="496.6" width="1.9" height="4.3"/>
<rect x="486.9" y="484.95" width="4.2" height="1.9"/><rect x="504.9" y="484.95" width="4.2" height="1.9"/>
<rect x="486.9" y="488.85" width="4.2" height="1.9"/><rect x="504.9" y="488.85" width="4.2" height="1.9"/>
<rect x="486.9" y="492.95" width="4.2" height="1.9"/><rect x="504.9" y="492.95" width="4.2" height="1.9"/>
</g>
<rect x="491" y="483.6" width="14" height="13.2" fill="url(#drC)"/>
<rect x="491" y="483.4" width="14" height=".8" fill="#d8d8d8"/>
<rect x="480" y="478.9" width="2" height="2" fill="#e092d2"/><rect x="480" y="488.8" width="2" height="2" fill="#80eac4"/><rect x="480" y="499.8" width="2" height="2" fill="#cbcbfa"/>
<rect x="513.9" y="478" width="2" height="2" fill="#fff"/><rect x="513.9" y="488.8" width="2" height="2" fill="#e9c383"/><rect x="513.9" y="498.9" width="2" height="2" fill="#fff"/>
<defs><clipPath id="lgc"><rect x="592.8" y="471.7" width="44.6" height="36.6" rx="4.6"/></clipPath></defs>
<g clip-path="url(#lgc)"><rect x="592" y="471" width="23" height="38" fill="#f6f5f4"/><rect x="615" y="471" width="23" height="18.7" fill="#3584e4"/><rect x="615" y="489.7" width="23" height="19" fill="#4a93e8"/></g>
<rect x="593.2" y="472.1" width="43.8" height="35.8" rx="4.3" fill="none" stroke="#fff" stroke-opacity=".35" stroke-width=".8"/>
<text x="604.6" y="496" font-family="DejaVu Sans,sans-serif" font-size="16.4" text-anchor="middle" fill="#77767b">A</text>
<text x="626.6" y="495.6" font-family="Noto Sans CJK SC,Noto Sans CJK JP,sans-serif" font-size="14.5" text-anchor="middle" fill="#fff">文</text>
<defs><linearGradient id="stB" x1="0" y1="0" x2="0" y2="1"><stop offset="0" stop-color="#e9e9e9"/><stop offset="1" stop-color="#f5f5f5"/></linearGradient><clipPath id="stc"><rect x="709.8" y="471.7" width="44.6" height="36.6" rx="4.6"/></clipPath></defs>
<rect x="709.8" y="471.7" width="44.6" height="36.6" rx="4.6" fill="url(#stB)"/>
<rect x="710.2" y="472.1" width="43.8" height="35.8" rx="4.3" fill="none" stroke="#fff" stroke-opacity=".8" stroke-width=".8"/>
<g clip-path="url(#stc)" fill="none"><path d="M708.95,481.26 C710.32,481.28 715.17,480.88 717.16,481.4 C719.16,481.93 719.9,482.53 720.9,484.39 C721.89,486.26 722.45,489.93 723.14,492.61 C723.82,495.28 724.38,498.96 725.01,500.45 C725.63,501.94 725.57,501.38 726.87,501.57 C728.18,501.76 731.35,501.94 732.85,501.57 C734.34,501.2 735.03,501.44 735.83,499.33 C736.64,497.21 737.14,491.98 737.7,488.87 C738.26,485.76 738.57,482.43 739.2,480.66 C739.82,478.89 740.69,478.45 741.44,478.27 C742.18,478.08 742.99,478.39 743.68,479.54 C744.36,480.68 744.92,483.09 745.54,485.14 C746.17,487.19 746.85,490.55 747.41,491.86 C747.97,493.17 748.41,493.35 748.9,492.98 C749.4,492.61 749.9,490.65 750.4,489.62 C750.9,488.59 751.08,487.28 751.89,486.78 C752.7,486.28 754.69,486.66 755.25,486.63" stroke="#78b2ea" stroke-width=".9"/><path d="M708.95,494.47 C709.51,494.44 711.5,494.81 712.31,494.25 C713.12,493.69 713.24,492.26 713.8,491.11 C714.36,489.97 715.11,487.75 715.67,487.38 C716.23,487.01 716.67,487.63 717.16,488.87 C717.66,490.12 718.16,492.98 718.66,494.85 C719.16,496.71 719.53,498.83 720.15,500.08 C720.77,501.32 721.71,502.25 722.39,502.32 C723.08,502.38 723.7,502.07 724.26,500.45 C724.82,498.83 725.25,495.28 725.75,492.61 C726.25,489.93 726.62,486.32 727.25,484.39 C727.87,482.46 728.68,481.69 729.49,481.03 C730.3,480.37 730.92,480.5 732.1,480.43 C733.28,480.37 735.46,480.12 736.58,480.66 C737.7,481.19 738.14,482.03 738.82,483.65 C739.51,485.26 740.13,489 740.69,490.37 C741.25,491.74 741.62,491.86 742.18,491.86 C742.74,491.86 743.49,490.83 744.05,490.37 C744.61,489.91 745.05,488.97 745.54,489.1 C746.04,489.22 746.54,490.03 747.04,491.11 C747.54,492.2 748.03,494.41 748.53,495.59 C749.03,496.78 748.9,497.77 750.02,498.21 C751.14,498.64 754.38,498.21 755.25,498.21" stroke="#e01b3a" stroke-width="1.2"/></g>
</g>
</svg>
  <div class="lbl" style="left:229px;top:379px"><span style="letter-spacing:-.44px">Calculat</span><span style="margin-left:1.8px">…</span></div>
  <div class="lbl" style="left:346px;top:379px"><span style="letter-spacing:-.23px;word-spacing:-.5px">Éditeur </span>…</div>
  <div class="lbl" style="left:463px;top:379px">Moniteu…</div>
  <div class="lbl" style="left:586px;top:379px">Terminal</div>
  <div class="lbl" style="left:699px;top:379px">Utilitaires</div>
  <div class="lbl" style="left:814px;top:379px">Applica…</div>
  <div class="lbl" style="left:931px;top:379px"><span style="letter-spacing:-.21px">Gestion</span>…</div>
  <div class="lbl" style="left:1056px;top:379px">GParted</div>
  <div class="lbl" style="left:229px;top:520px"><span style="letter-spacing:-.2px">Logiciel</span>…</div>
  <div class="lbl" style="left:346px;top:520px"><span style="letter-spacing:-.13px">Paramè</span>…</div>
  <div class="lbl" style="left:463px;top:520px">Pilotes …</div>
  <div class="lbl" style="left:580px;top:520px"><span style="word-spacing:-1.9px">Prise en </span>…</div>
  <div class="lbl" style="left:697px;top:520px">Statisti…</div>
  <div id="topline"></div><div id="botline"></div><div id="rightline"></div>
</div>
</body>
</html>
